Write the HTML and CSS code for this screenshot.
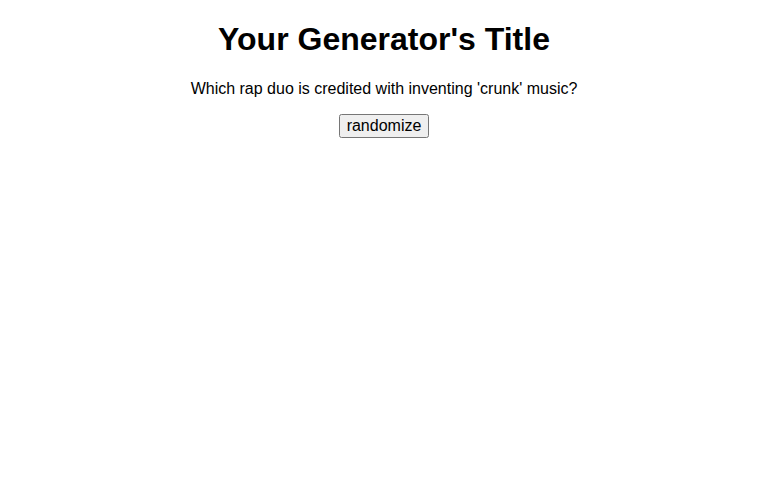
FILE: index.html
```html
<!DOCTYPE html>
<html>
<head>
<meta charset="utf-8">
<title>Generator</title>
<link rel="stylesheet" href="styles.css">
</head>
<body class="page">
<h1 class="title">Your Generator's Title</h1>
<p class="output">Which rap duo is credited with inventing 'crunk' music?</p>
<button class="randomize">randomize</button>
</body>
</html>
```
FILE: styles.css
```css
.page {
  margin: 0 8px 8px;
  font-family: "Liberation Sans", Arial, sans-serif;
  text-align: center;
  color: #000;
  background: #fff;
}
.title {
  font-size: 32px;
  margin: 21.44px 0;
}
.output {
  font-size: 16px;
  margin: 16px 0;
}
.randomize {
  font-family: "Liberation Sans", Arial, sans-serif;
  font-size: 16px;
}
```
